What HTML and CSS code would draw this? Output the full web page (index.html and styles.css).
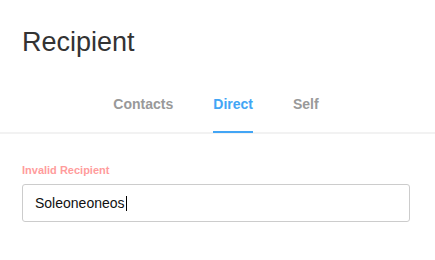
FILE: index.html
```html
<!DOCTYPE html>
<html lang="en">
<head>
<meta charset="utf-8">
<title>Recipient</title>
<link rel="stylesheet" href="styles.css">
</head>
<body>
  <h1 class="title">Recipient</h1>
  <nav class="tabs">
    <span class="tab">Contacts</span>
    <span class="tab tab-active">Direct</span>
    <span class="tab">Self</span>
  </nav>
  <div class="field">
    <label class="field-label">Invalid Recipient</label>
    <div class="field-input"><span class="field-text">Soleoneoneos</span><span class="caret"></span></div>
  </div>
</body>
</html>
```
FILE: styles.css
```css
html, body {
  margin: 0;
  padding: 0;
  background: #ffffff;
  font-family: "Liberation Sans", Arial, sans-serif;
}

.title {
  margin: 27px 0 0 22px;
  font-size: 27px;
  line-height: 30px;
  font-weight: normal;
  color: #333333;
}

.tabs {
  display: flex;
  justify-content: center;
  margin-top: 37px;
  padding-right: 3px;
  border-bottom: 2px solid #f2f2f2;
}

.tab {
  margin: 0 20px -1px;
  padding-bottom: 17px;
  font-size: 14px;
  line-height: 20px;
  font-weight: bold;
  color: #999999;
  border-bottom: 2px solid transparent;
}

.tab-active {
  color: #42a5f5;
  border-bottom-color: #42a5f5;
}

.field {
  margin: 30px 25px 0 22px;
}

.field-label {
  display: block;
  font-size: 11px;
  line-height: 13px;
  font-weight: bold;
  color: #ff9c9c;
}

.field-input {
  display: flex;
  align-items: center;
  margin-top: 7px;
  height: 36px;
  padding-left: 12px;
  border: 1px solid #cccccc;
  border-radius: 3px;
  font-size: 14px;
  line-height: 36px;
  color: #111111;
}

.caret {
  display: inline-block;
  width: 1px;
  height: 15px;
  margin-left: 1px;
  background: #000000;
}
```
